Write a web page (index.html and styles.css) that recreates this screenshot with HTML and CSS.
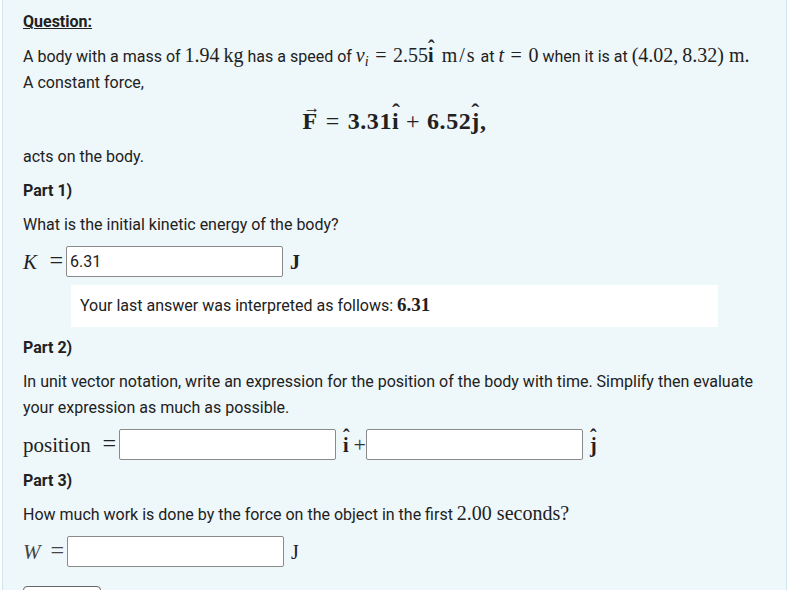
FILE: index.html
```html
<!DOCTYPE html>
<html lang="en">
<head>
<meta charset="UTF-8">
<title>Question</title>
<link rel="stylesheet" href="styles.css">
</head>
<body>
	<div class="panel">
		<p class="qtitle">Question:</p>
		<p>A body with a mass of <span class="m">1.94&thinsp;kg</span> has a speed of <span class="m"><i>v</i><sub><i>i</i></sub><span class="rel">=</span>2.55<b class="hat">i</b><span class="su">m/s</span></span> at <span class="m"><i>t</i><span class="rel">=</span>0</span> when it is at <span class="m">(4.02,&thinsp;8.32)&nbsp;m.</span><br>A constant force,</p>
		<div class="display m"><b class="vec">F</b><span class="rel">=</span>3.31<b class="hat">i</b><span class="bin">+</span>6.52<b class="hat">j</b>,</div>
		<p>acts on the body.</p>

		<h4>Part 1)</h4>
		<p>What is the initial kinetic energy of the body?</p>
		<div class="row">
			<span class="m label lbl-k"><i>K</i><span class="rel">=</span></span>
			<input class="ans" type="text" value="6.31">
			<span class="m unit"><b>J</b></span>
		</div>
		<div class="feedback">Your last answer was interpreted as follows: <span class="m">6.31</span></div>

		<h4>Part 2)</h4>
		<p>In unit vector notation, write an expression for the position of the body with time. Simplify then evaluate your expression as much as possible.</p>
		<div class="row">
			<span class="m label lbl-pos">position<span class="rel">=</span></span>
			<input class="ans" type="text">
			<span class="m unit"><b class="hat">i</b><span class="plus">+</span></span><input class="ans" type="text">
			<span class="m unit"><b class="hat">j</b></span>
		</div>

		<h4>Part 3)</h4>
		<p>How much work is done by the force on the object in the first <span class="m">2.00&nbsp;seconds?</span></p>
		<div class="row">
			<span class="m label lbl-w light"><i>W</i><span class="rel">=</span></span>
			<input class="ans" type="text">
			<span class="m unit">J</span>
		</div>
		<button class="check" type="button">Check</button>
	</div>
</body>
</html>
```

FILE: styles.css
```css
body {margin: 0;background-color: #fff;font-family: Roboto, "Liberation Sans", sans-serif;font-size: 16px;color: #212121;}
p, h4 {margin: 0;}
.panel {margin-left: 2px;width: 741px;padding: 9px 22px 20px 20px;background-color: #eef7fa;border-left: 1px solid #cfe6ef;border-right: 1px solid #cfe6ef;display: flex;flex-direction: column;align-items: flex-start;gap: 8px;}
.panel p {line-height: 26px;}
.qtitle {font-weight: bold;text-decoration: underline;margin-bottom: 1px;}
h4 {font-size: 16px;line-height: 26px;font-weight: bold;}

.m {font-family: "Liberation Serif", "DejaVu Serif", serif;font-size: 20px;line-height: 16px;white-space: nowrap;}
.m i {font-style: italic;}
.m sub {font-size: 0.7em;line-height: 0;vertical-align: -0.25em;}
.rel {margin: 0 0.33em;font-weight: normal;}
.bin {margin: 0 0.28em;font-weight: normal;}
.su {margin-left: 0.4em;letter-spacing: 2px;}
.hat {position: relative;display: inline-block;font-weight: bold;}
.hat::before {content: "\02C6";position: absolute;left: 0;right: 0;top: -0.36em;text-align: center;font-weight: bold;}
.vec {position: relative;display: inline-block;}
.vec::before {content: "\2192";position: absolute;left: 1px;right: 0;top: -6px;line-height: 1;text-align: center;font-size: 0.7em;font-weight: bold;}

.display {align-self: stretch;text-align: center;font-weight: bold;font-size: 24px;line-height: 30px;letter-spacing: 0.6px;margin-top: 2px;padding-left: 2px;}

.row {display: flex;align-items: center;height: 31px;}
.label {display: flex;justify-content: space-between;align-items: baseline;font-size: 21px;}
.label .rel {margin: 0 3px 0 0;font-size: 1.15em;}
.lbl-k {width: 43px;}
.lbl-pos {width: 96px;}
.lbl-w {width: 44px;}
.ans {width: 217px;height: 31px;box-sizing: border-box;border: 1px solid #8a8a8a;border-radius: 2px;padding: 0 3px;font-family: Roboto, "Liberation Sans", sans-serif;font-size: 16px;color: #222;background-color: #fff;margin: 0;}
.unit {margin-left: 7px;}
.plus {margin-left: 5px;font-size: 22px;font-weight: normal;color: #333;}
.light {color: #444;}

.feedback {margin-left: 48px;width: 638px;padding: 0 0 0 9px;height: 42px;line-height: 42px;background-color: #fff;}
.feedback .m {font-weight: bold;font-size: 19px;}

.check {margin-top: 11px;width: 78px;height: 32px;background-color: #fff;border: 1px solid #666;border-radius: 4px;font-family: Roboto, sans-serif;font-size: 15px;}
```
